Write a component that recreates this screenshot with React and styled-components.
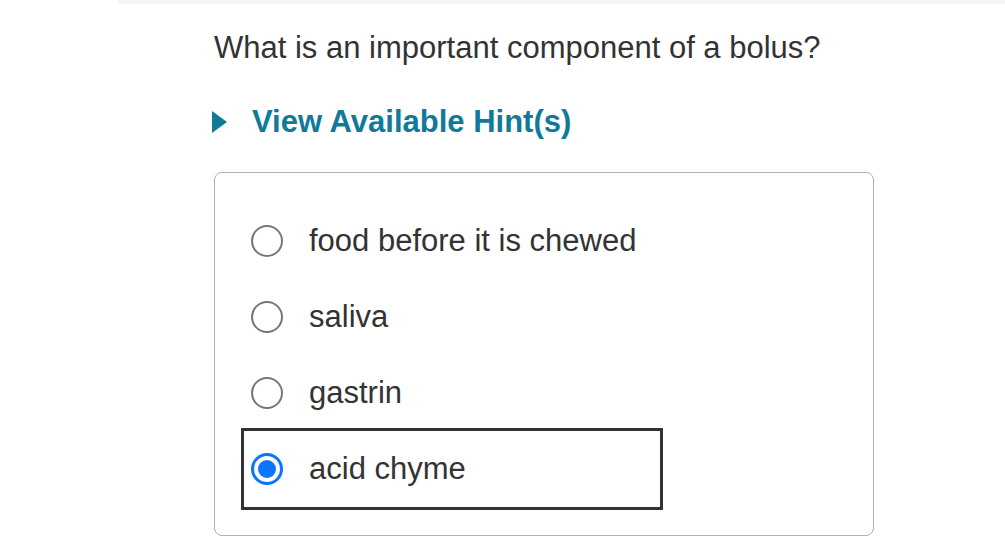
import React, { useState } from "react";
import styled, { createGlobalStyle } from "styled-components";

const GlobalStyle = createGlobalStyle`
  body {
    margin: 0;
    background: #ffffff;
    font-family: "Liberation Sans", Arial, sans-serif;
  }
`;

const Page = styled.div`
  margin-left: 118px;
  border-top: 4px solid #f5f5f5;
  padding: 26px 0 0 96px;
`;

const Question = styled.div`
  font-size: 31px;
  color: #333333;
  line-height: 36px;
`;

const HintToggle = styled.div`
  display: flex;
  align-items: center;
  gap: 25px;
  margin-top: 39px;
  line-height: 34px;
  color: #0f7a99;
  font-size: 31px;
  font-weight: 700;
  cursor: pointer;

  .arrow {
    width: 0;
    height: 0;
    margin-left: -2px;
    border-top: 11.5px solid transparent;
    border-bottom: 11.5px solid transparent;
    border-left: 15px solid #0f7a99;
  }
`;

const Choices = styled.div`
  width: 660px;
  box-sizing: border-box;
  margin-top: 33px;
  border: 1.5px solid #b0b0b0;
  border-radius: 8px;
  padding: 30px 0 28px 29px;
  display: flex;
  flex-direction: column;
`;

const Choice = styled.label`
  display: flex;
  align-items: center;
  gap: 26px;
  width: 416px;
  height: 76px;
  box-sizing: border-box;
  padding-left: 7px;
  font-size: 31px;
  color: #333333;
  cursor: pointer;
  outline: ${(p) => (p.$selected ? "3px solid #333333" : "none")};
`;

const Radio = styled.span`
  width: 32px;
  height: 32px;
  box-sizing: border-box;
  border-radius: 50%;
  border: ${(p) => (p.$checked ? "3px solid #0a75ff" : "2px solid #777777")};
  background: #ffffff;
  display: flex;
  align-items: center;
  justify-content: center;
  flex-shrink: 0;

  &::after {
    content: "";
    width: 18px;
    height: 18px;
    border-radius: 50%;
    background: #0a75ff;
    display: ${(p) => (p.$checked ? "block" : "none")};
  }
`;

const options = [
  "food before it is chewed",
  "saliva",
  "gastrin",
  "acid chyme",
];

export default function App() {
  const [picked, setPicked] = useState(3);

  return (
    <>
      <GlobalStyle />
      <Page>
        <Question>What is an important component of a bolus?</Question>
        <HintToggle>
          <span className="arrow" />
          View Available Hint(s)
        </HintToggle>
        <Choices>
          {options.map((text, i) => (
            <Choice
              key={text}
              $selected={picked === i}
              onClick={() => setPicked(i)}
            >
              <Radio $checked={picked === i} />
              {text}
            </Choice>
          ))}
        </Choices>
      </Page>
    </>
  );
}
